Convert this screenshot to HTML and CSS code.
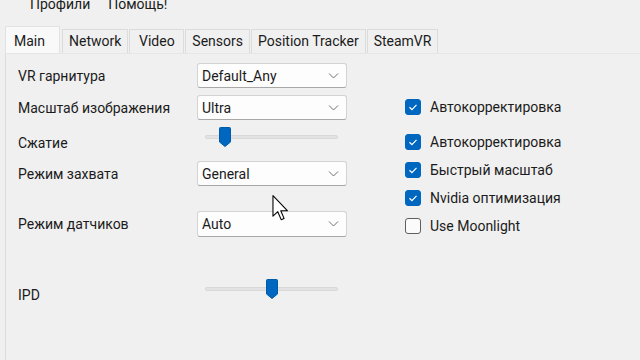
FILE: index.html
```html
<!DOCTYPE html>
<html lang="ru">
<head>
  <meta charset="UTF-8" />
  <meta name="viewport" content="width=device-width, initial-scale=1.0"/>
  <title>Настройки</title>
  <link rel="stylesheet" href="styles.css">
</head>

<body>
  <div class="menubar">
    <span>Профили</span>
    <span>Помощь!</span>
  </div>

  <div class="tabs">
    <div class="tab active">Main</div>
    <div class="tab">Network</div>
    <div class="tab">Video</div>
    <div class="tab">Sensors</div>
    <div class="tab">Position Tracker</div>
    <div class="tab">SteamVR</div>
  </div>

  <div class="panel">
    <div class="form">
      <div class="row r1">
        <label>VR гарнитура</label>
        <div class="combo">Default_Any<svg class="chev" viewBox="0 0 10 6"><path d="M0.5 0.5 L5 5 L9.5 0.5"/></svg></div>
      </div>
      <div class="row r2">
        <label>Масштаб изображения</label>
        <div class="combo">Ultra<svg class="chev" viewBox="0 0 10 6"><path d="M0.5 0.5 L5 5 L9.5 0.5"/></svg></div>
      </div>
      <div class="row r3">
        <label class="low">Сжатие</label>
        <div class="slider">
          <div class="track"></div>
          <svg class="thumb" style="left: 22px" viewBox="0 0 12 20"><path d="M1.5 0.5 H10.5 Q11.5 0.5 11.5 1.5 V15 L6 19.5 L0.5 15 V1.5 Q0.5 0.5 1.5 0.5 Z"/></svg>
        </div>
      </div>
      <div class="row r4">
        <label>Режим захвата</label>
        <div class="combo">General<svg class="chev" viewBox="0 0 10 6"><path d="M0.5 0.5 L5 5 L9.5 0.5"/></svg></div>
      </div>
      <div class="row r5">
        <label>Режим датчиков</label>
        <div class="combo">Auto<svg class="chev" viewBox="0 0 10 6"><path d="M0.5 0.5 L5 5 L9.5 0.5"/></svg></div>
      </div>
      <div class="row r6">
        <label class="low">IPD</label>
        <div class="slider">
          <div class="track"></div>
          <svg class="thumb" style="left: 69px" viewBox="0 0 12 20"><path d="M1.5 0.5 H10.5 Q11.5 0.5 11.5 1.5 V15 L6 19.5 L0.5 15 V1.5 Q0.5 0.5 1.5 0.5 Z"/></svg>
        </div>
      </div>
    </div>

    <div class="checks">
      <div class="check first"><span class="box on"><svg viewBox="0 0 16 16"><path d="M4 8.3 L6.8 11 L12 5.5"/></svg></span>Автокорректировка</div>
      <div class="check"><span class="box on"><svg viewBox="0 0 16 16"><path d="M4 8.3 L6.8 11 L12 5.5"/></svg></span>Автокорректировка</div>
      <div class="check"><span class="box on"><svg viewBox="0 0 16 16"><path d="M4 8.3 L6.8 11 L12 5.5"/></svg></span>Быстрый масштаб</div>
      <div class="check"><span class="box on"><svg viewBox="0 0 16 16"><path d="M4 8.3 L6.8 11 L12 5.5"/></svg></span>Nvidia оптимизация</div>
      <div class="check"><span class="box"></span>Use Moonlight</div>
    </div>

    <!-- mouse pointer over the form -->
    <svg class="cursor" viewBox="0 0 12 19">
      <path d="M0.5 0.5 V15.5 L4 12.2 L6.5 18 L8.6 17.1 L6.2 11.5 H11 Z"/>
    </svg>
  </div>
</body>
</html>
```

FILE: styles.css
```css
* {
  box-sizing: border-box;
}

body {
  margin: 0;
  background-color: #f0f0f0;
  font-family: Roboto, 'Noto Sans', 'Liberation Sans', sans-serif;
  font-size: 14px;
  color: #1b1b1b;
  height: 360px;
  overflow: hidden;
}

.menubar {
  display: flex;
  gap: 18px;
  margin-top: -5px;
  padding-left: 30px;
  line-height: 19px;
}

.tabs {
  display: flex;
  align-items: flex-end;
  margin-top: 12px;
  padding-left: 5px;
  height: 27px;
}

.tab {
  min-width: 55px;
  height: 24px;
  line-height: 22px;
  padding: 0 6px;
  margin-left: 1px;
  text-align: center;
  border: 1px solid #dcdcdc;
  border-bottom: none;
  background-color: #f0f0f0;
}

.tab.active {
  height: 27px;
  line-height: 28px;
  padding: 0 13px 0 8px;
  margin-left: 0;
  margin-right: 1px;
  text-align: left;
  background-color: #f9f9f9;
  border-color: #e2e2e2;
}

.panel {
  position: relative;
  display: grid;
  grid-template-columns: 399px 1fr;
  margin-left: 5px;
  height: 320px;
  border-left: 1px solid #dcdcdc;
  border-top: 1px solid #e6e6e6;
}

.form {
  display: flex;
  flex-direction: column;
  padding-left: 12px;
}

.row {
  display: flex;
  align-items: center;
}

.row label {
  width: 179px;
}

.row label.low {
  align-self: flex-end;
}

.r1 { margin-top: 9px; height: 25px; }
.r2 { margin-top: 7px; height: 25px; }
.r3 { margin-top: 7px; height: 24px; }
.r4 { margin-top: 10px; height: 25px; }
.r5 { margin-top: 25px; height: 26px; }
.r6 { margin-top: 42px; height: 24px; }

.combo {
  position: relative;
  width: 150px;
  height: 100%;
  padding-left: 4px;
  line-height: 24px;
  background-color: #fdfdfd;
  border: 1px solid #d3d3d3;
  border-bottom-color: #a8a8a8;
  border-radius: 3px;
}

.chev {
  position: absolute;
  right: 7px;
  top: 9px;
  width: 11px;
  height: 6px;
  fill: none;
  stroke: #707070;
  stroke-width: 1;
}

.slider {
  position: relative;
  width: 150px;
  height: 20px;
  align-self: flex-start;
}

.track {
  position: absolute;
  left: 8px;
  top: 8px;
  width: 133px;
  height: 4px;
  background-color: #e3e3e3;
  border: 1px solid #d8d8d8;
  border-radius: 2px;
}

.thumb {
  position: absolute;
  top: 0;
  width: 12px;
  height: 20px;
  fill: #0067c0;
  stroke: #005aa8;
  stroke-width: 1;
}

.checks {
  display: flex;
  flex-direction: column;
  gap: 8px;
  padding-top: 43px;
}

.check {
  display: flex;
  align-items: center;
  height: 20px;
}

.check.first {
  margin-bottom: 7px;
}

.box {
  width: 16px;
  height: 16px;
  margin-right: 9px;
  border: 1px solid #5f5f5f;
  border-radius: 3px;
  background-color: #fbfbfb;
}

.box.on {
  background-color: #0067c0;
  border-color: #0067c0;
}

.box svg {
  display: block;
  width: 14px;
  height: 14px;
  fill: none;
  stroke: #ffffff;
  stroke-width: 1.4;
}

.cursor {
  position: absolute;
  left: 266px;
  top: 141px;
  width: 17px;
  height: 26px;
  fill: #ffffff;
  stroke: #000000;
  stroke-width: 0.8;
  stroke-linejoin: round;
}
```
